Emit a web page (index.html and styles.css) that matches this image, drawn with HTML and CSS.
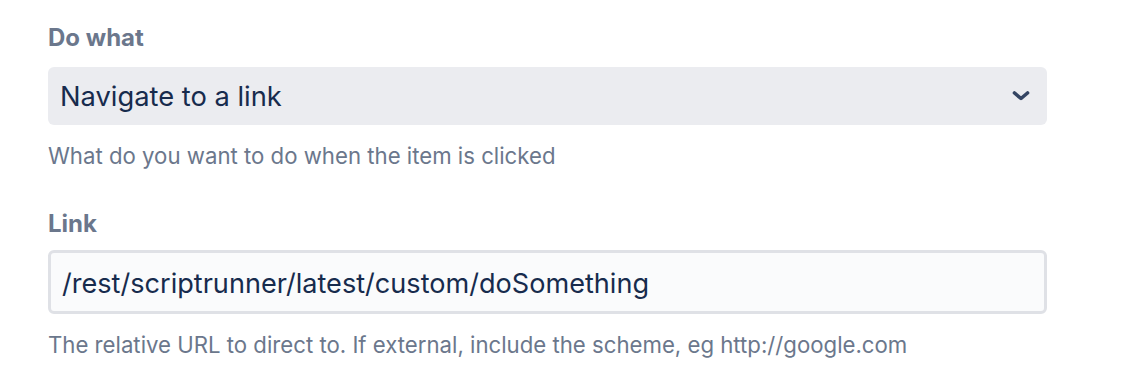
FILE: index.html
```html
<!DOCTYPE html>
<html>
<head>
<meta charset="utf-8">
<link rel="stylesheet" href="styles.css">
</head>
<body>
<div class="form">
  <div class="field">
    <label class="label">Do what</label>
    <div class="select">
      <span class="select-value">Navigate to a link</span>
      <svg class="chevron" width="20" height="14" viewBox="0 0 20 14"><path d="M3.5 4l6.5 5.5 6.5-5.5" fill="none" stroke="#344563" stroke-width="3.6" stroke-linecap="round" stroke-linejoin="round"/></svg>
    </div>
    <div class="helper">What do you want to do when the item is clicked</div>
  </div>
  <div class="field second">
    <label class="label">Link</label>
    <div class="input">/rest/scriptrunner/latest/custom/doSomething</div>
    <div class="helper">The relative URL to direct to. If external, include the scheme, eg http://google.com</div>
  </div>
</div>
</body>
</html>
```
FILE: styles.css
```css
html, body {
  margin: 0;
  background: #ffffff;
}
body {
  font-family: Inter, "Noto Sans", "Liberation Sans", sans-serif;
}
.form {
  padding: 24px 0 0 48px;
  width: 999px;
}
.field {
  display: flex;
  flex-direction: column;
}
.second {
  margin-top: 41px;
}
.label {
  font-size: 24px;
  font-weight: 700;
  color: #6b778c;
  line-height: 28px;
  margin-bottom: 15px;
}
.second .label {
  margin-bottom: 12px;
}
.select {
  height: 58px;
  background: #ebecf0;
  border-radius: 6px;
  display: flex;
  align-items: center;
  justify-content: space-between;
  padding: 0 16px 0 12px;
}
.select-value {
  font-size: 27.3px;
  color: #172b4d;
}
.helper {
  font-size: 22.2px;
  color: #6b778c;
  margin-top: 18px;
  line-height: 26px;
}
.input {
  box-sizing: border-box;
  height: 64px;
  border: 3px solid #dfe1e6;
  background: #fafbfc;
  border-radius: 6px;
  display: flex;
  align-items: center;
  padding: 3px 11px 0;
  font-size: 27.1px;
  color: #172b4d;
}
```
